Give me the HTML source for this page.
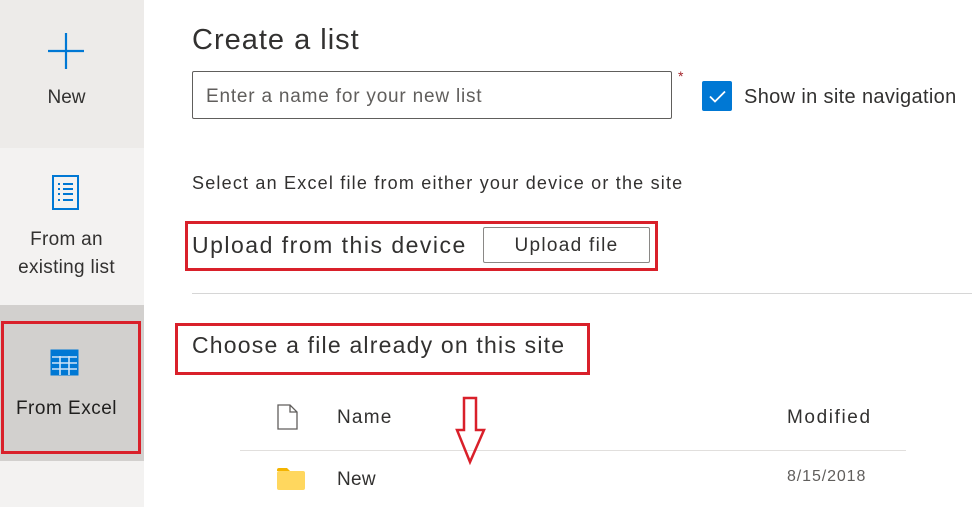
<!DOCTYPE html>
<html><head><style>
*{margin:0;padding:0;box-sizing:border-box}
body{width:972px;height:507px;overflow:hidden;background:#fff;font-family:"Liberation Sans",sans-serif;color:#323130;position:relative}
.a{position:absolute}
.t{position:absolute;white-space:nowrap}
.red{position:absolute;border:3px solid #d9202a}
</style></head><body>
<div class="a" style="left:0;top:0;width:144px;height:507px;background:#f3f2f1"></div>
<div class="a" style="left:0;top:0;width:144px;height:148px;background:#edebe9"></div>
<div class="a" style="left:0;top:305px;width:144px;height:156px;background:#d2d0ce"></div>
<svg class="a" style="left:47px;top:32px" width="38" height="38"><path d="M19 1V37M1 19H37" stroke="#0078d4" stroke-width="2.2"/></svg>
<div class="t" style="left:0;width:133px;text-align:center;top:87px;font-size:19px;color:#323130">New</div>
<svg class="a" style="left:51px;top:174px" width="30" height="38"><rect x="2" y="2" width="25" height="33" fill="none" stroke="#0078d4" stroke-width="2"/><path d="M7 10h2M12 10h10M7 15h2M12 15h10M7 20h2M12 20h10M7 26h2M12 26h10" stroke="#0078d4" stroke-width="2"/></svg>
<div class="t" style="left:0;width:133px;text-align:center;top:226px;font-size:19px;line-height:28px;color:#323130;letter-spacing:0.3px">From an<br>existing list</div>
<svg class="a" style="left:49px;top:348px" width="32" height="30"><rect x="1.5" y="1.5" width="28" height="26" fill="#0078d4"/><path d="M3 9h25M3 15h25M3 21h25M11 8v19M20 8v19" stroke="#cfe4f7" stroke-width="1.6"/></svg>
<div class="t" style="left:0;width:133px;text-align:center;top:398px;font-size:19px;color:#201f1e;letter-spacing:0.5px">From Excel</div>
<div class="red" style="left:1px;top:321px;width:140px;height:133px"></div>

<div class="t" style="left:192px;top:24px;font-size:29px;color:#323130;letter-spacing:1px">Create a list</div>
<div class="a" style="left:192px;top:71px;width:480px;height:48px;border:1px solid #605e5c;border-radius:2px"></div>
<div class="t" style="left:206px;top:86px;font-size:19px;color:#605e5c;letter-spacing:0.8px">Enter a name for your new list</div>
<div class="t" style="left:678px;top:68px;font-size:14px;color:#a4262c">*</div>
<div class="a" style="left:702px;top:81px;width:30px;height:30px;background:#0078d4;border-radius:2px"></div>
<svg class="a" style="left:702px;top:81px" width="30" height="30"><path d="M8 15.5l5 5 10-10" stroke="#fff" stroke-width="1.8" fill="none"/></svg>
<div class="t" style="left:744px;top:86px;font-size:20px;color:#323130;letter-spacing:0.35px">Show in site navigation</div>
<div class="t" style="left:192px;top:173px;font-size:18px;color:#323130;letter-spacing:1.2px">Select an Excel file from either your device or the site</div>
<div class="t" style="left:192px;top:232px;font-size:23px;color:#323130;letter-spacing:1.5px">Upload from this device</div>
<div class="a" style="left:483px;top:227px;width:167px;height:36px;border:1px solid #8a8886;border-radius:2px"></div>
<div class="t" style="left:483px;top:235px;width:167px;text-align:center;font-size:19px;color:#323130;letter-spacing:1.3px">Upload file</div>
<div class="red" style="left:185px;top:221px;width:473px;height:50px"></div>
<div class="a" style="left:192px;top:293px;width:780px;height:1px;background:#d6d6d6"></div>
<div class="t" style="left:192px;top:332px;font-size:23px;color:#323130;letter-spacing:1.2px">Choose a file already on this site</div>
<div class="red" style="left:175px;top:323px;width:415px;height:52px"></div>

<svg class="a" style="left:276px;top:404px" width="24" height="26"><path d="M2 1h12l7 7v17H2z M14 1v7h7" fill="none" stroke="#605e5c" stroke-width="1.3"/></svg>
<div class="t" style="left:337px;top:407px;font-size:19px;color:#323130;letter-spacing:1.2px">Name</div>
<div class="t" style="left:787px;top:407px;font-size:19px;color:#323130;letter-spacing:1.6px">Modified</div>
<div class="a" style="left:240px;top:450px;width:666px;height:1px;background:#e1dfdd"></div>
<svg class="a" style="left:276px;top:467px" width="30" height="24"><path d="M1 3a2 2 0 0 1 2-2h8l3 3H1z" fill="#f4b400"/><rect x="1" y="4" width="28" height="19" rx="2" fill="#ffd75e"/></svg>
<div class="t" style="left:337px;top:469px;font-size:19px;color:#323130;letter-spacing:0.3px">New</div>
<div class="t" style="left:787px;top:468px;font-size:16px;color:#605e5c;letter-spacing:0.9px">8/15/2018</div>
<svg class="a" style="left:454px;top:396px" width="34" height="70"><path d="M10 2h12v32h8L16 66 3 34h7z" fill="none" stroke="#d9202a" stroke-width="2.5"/></svg>
</body></html>
